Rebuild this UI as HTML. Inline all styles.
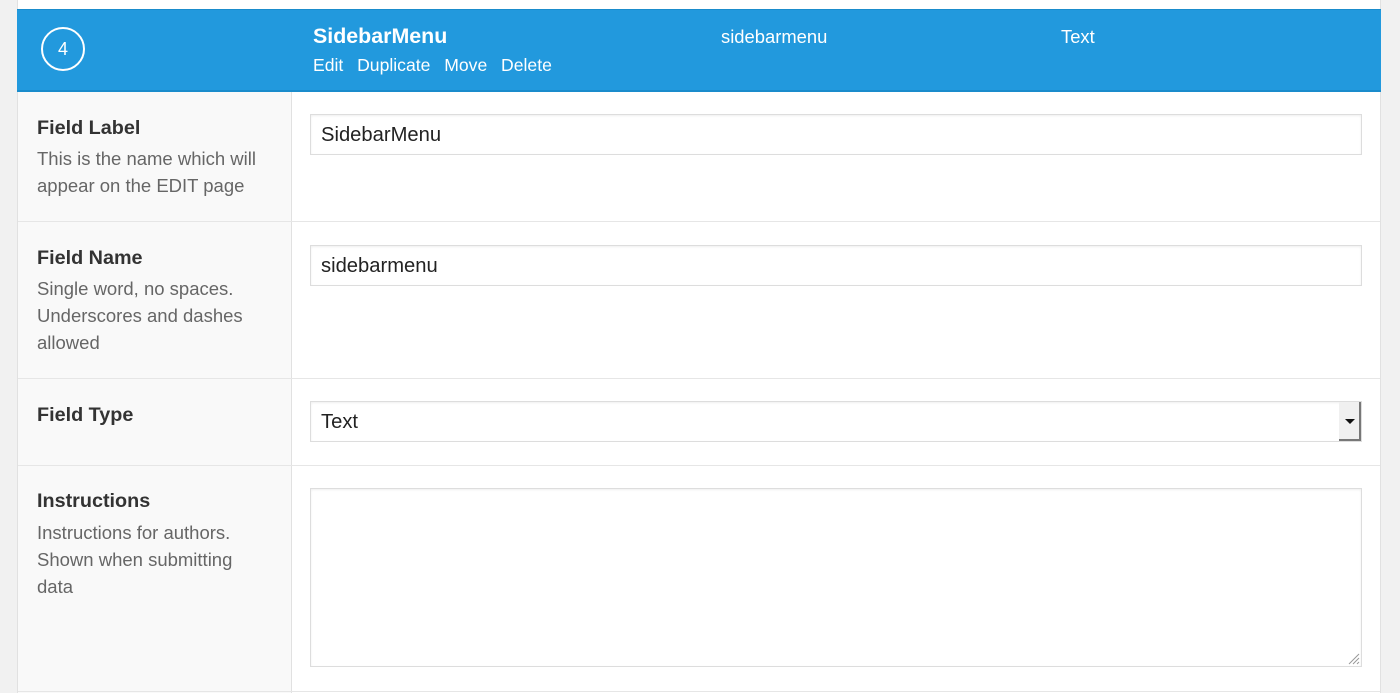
<!DOCTYPE html>
<html><head><style>
*{box-sizing:border-box;margin:0;padding:0}
body{width:1400px;height:693px;background:#f1f1f1;font-family:"Liberation Sans",Arial,sans-serif;position:relative;overflow:hidden}
.panel{position:absolute;left:17px;top:0;width:1364px;height:693px;background:#fff;border-left:1px solid #e1e1e1;border-right:1px solid #e1e1e1}
.hdr{position:absolute;left:17px;top:9px;width:1364px;height:83px;background:#2299dd;border-top:1px solid #1a8ccc;border-bottom:2px solid #1a8ccc;color:#fff}
.circ{position:absolute;left:24px;top:17px;width:44px;height:44px;border:2px solid #fff;border-radius:50%;text-align:center;line-height:40px;font-size:18px}
.t{position:absolute;font-weight:bold}
.lcol{position:absolute;left:18px;width:274px;background:#f9f9f9;border-right:1px solid #e1e1e1}
.hr{position:absolute;left:18px;width:1362px;height:1px;background:#e6e6e6}
.lab{position:absolute;left:37px;font-size:19.8px;font-weight:bold;color:#333}
.desc{position:absolute;left:37px;font-size:18.5px;color:#666;line-height:27px;width:235px}
.inp{position:absolute;left:310px;width:1052px;height:41px;border:1px solid #ddd;box-shadow:inset 0 1px 2px rgba(0,0,0,.07);font-size:20.2px;color:#222;padding-left:10px;line-height:40px}
</style></head><body>
<div class="panel"></div>
<div class="lcol" style="top:92px;height:601px"></div>
<div class="hdr">
<div class="circ">4</div>
<div class="t" style="left:296px;top:14px;font-size:21.4px">SidebarMenu</div>
<div style="position:absolute;left:296px;top:45px;font-size:17.6px;word-spacing:2px">Edit&nbsp; Duplicate&nbsp; Move&nbsp; Delete</div>
<div style="position:absolute;left:704px;top:16px;font-size:18.4px">sidebarmenu</div>
<div style="position:absolute;left:1044px;top:16px;font-size:18.4px">Text</div>
</div>
<div class="hr" style="top:221px"></div>
<div class="hr" style="top:378px"></div>
<div class="hr" style="top:465px"></div>
<div class="hr" style="top:691px"></div>

<div class="lab" style="top:117px">Field Label</div>
<div class="desc" style="top:145px">This is the name which will appear on the EDIT page</div>
<div class="inp" style="top:114px">SidebarMenu</div>

<div class="lab" style="top:247px">Field Name</div>
<div class="desc" style="top:275px">Single word, no spaces. Underscores and dashes allowed</div>
<div class="inp" style="top:245px">sidebarmenu</div>

<div class="lab" style="top:404px">Field Type</div>
<div class="inp" style="top:401px">Text
<div style="position:absolute;right:0;top:0;width:22px;height:39px;background:#f0f0f0;border-right:2px solid #777;border-bottom:2px solid #777"><div style="position:absolute;left:6px;top:17px;border-left:5px solid transparent;border-right:5px solid transparent;border-top:5px solid #111"></div></div>
</div>

<div class="lab" style="top:490px">Instructions</div>
<div class="desc" style="top:519px;width:225px">Instructions for authors. Shown when submitting data</div>
<div class="inp" style="top:488px;height:179px">
<svg style="position:absolute;right:1px;bottom:1px" width="14" height="14"><path d="M13 3L3 13M13 7L7 13M13 11L11 13" stroke="#999" stroke-width="1"/></svg>
</div>
</body></html>
